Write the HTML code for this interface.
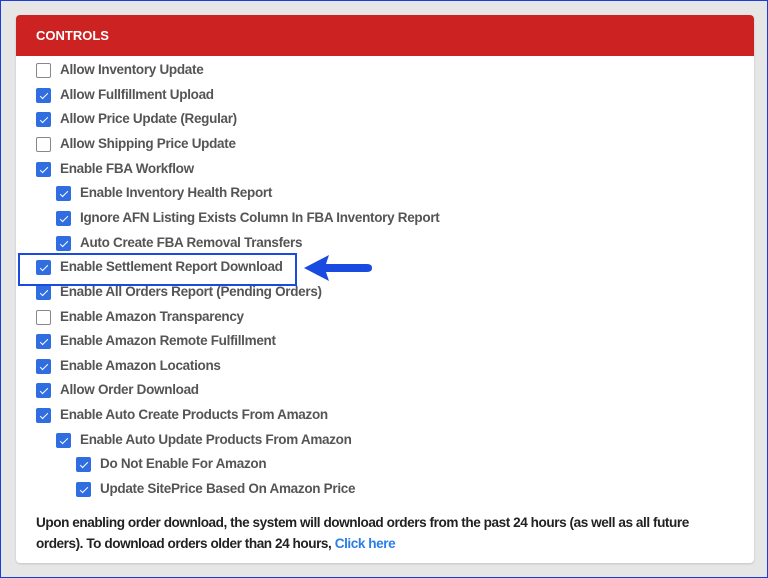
<!DOCTYPE html>
<html><head><style>
body{margin:0;width:768px;height:578px;background:#e6e6e6;font-family:"Liberation Sans",sans-serif;position:relative;overflow:hidden;box-sizing:border-box;border:1px solid #1a3fd8;}
.card{position:absolute;left:15px;top:14px;width:738px;height:548px;background:#fff;border-radius:4px;box-shadow:0 1px 2px rgba(0,0,0,.15);overflow:hidden}
.hdr{height:41px;background:#cc2222;color:#fff;font-weight:bold;font-size:13px;line-height:41px;padding-left:20px}
.row{position:absolute;height:20px;font-size:13.5px;color:#555;font-weight:bold;line-height:20px;white-space:nowrap;letter-spacing:-0.3px}
.cb{position:absolute;left:0;top:2px;width:15px;height:15px;border:1.5px solid #888;border-radius:2px;box-sizing:border-box}
.cb.on{background:#2f6de1;border-color:#2f6de1}
.cb.on::after{content:"";position:absolute;left:4.5px;top:1.5px;width:3px;height:7px;border:solid #fff;border-width:0 1.6px 1.6px 0;transform:rotate(45deg)}
.t{position:absolute;left:24px;top:-1px}
.p{position:absolute;width:700px;font-size:13.6px;color:#222;line-height:20.5px;font-weight:bold;letter-spacing:-0.45px;white-space:nowrap}
.p a{color:#2a7fe6;font-weight:bold;text-decoration:none}
.hl{position:absolute;left:17px;top:252px;width:279px;height:33px;border:2px solid #1a4be0;box-sizing:border-box}
</style></head><body>
<div class="card">
<div class="hdr">CONTROLS</div>
</div>
<div class="row" style="left:35px;top:60px"><span class="cb"></span><span class="t">Allow Inventory Update</span></div>
<div class="row" style="left:35px;top:85px"><span class="cb on"></span><span class="t">Allow Fullfillment Upload</span></div>
<div class="row" style="left:35px;top:109px"><span class="cb on"></span><span class="t">Allow Price Update (Regular)</span></div>
<div class="row" style="left:35px;top:134px"><span class="cb"></span><span class="t">Allow Shipping Price Update</span></div>
<div class="row" style="left:35px;top:159px"><span class="cb on"></span><span class="t">Enable FBA Workflow</span></div>
<div class="row" style="left:55px;top:183px"><span class="cb on"></span><span class="t">Enable Inventory Health Report</span></div>
<div class="row" style="left:55px;top:208px"><span class="cb on"></span><span class="t">Ignore AFN Listing Exists Column In FBA Inventory Report</span></div>
<div class="row" style="left:55px;top:233px"><span class="cb on"></span><span class="t">Auto Create FBA Removal Transfers</span></div>
<div class="row" style="left:35px;top:257px"><span class="cb on"></span><span class="t">Enable Settlement Report Download</span></div>
<div class="row" style="left:35px;top:282px"><span class="cb on"></span><span class="t">Enable All Orders Report (Pending Orders)</span></div>
<div class="row" style="left:35px;top:307px"><span class="cb"></span><span class="t">Enable Amazon Transparency</span></div>
<div class="row" style="left:35px;top:331px"><span class="cb on"></span><span class="t">Enable Amazon Remote Fulfillment</span></div>
<div class="row" style="left:35px;top:356px"><span class="cb on"></span><span class="t">Enable Amazon Locations</span></div>
<div class="row" style="left:35px;top:380px"><span class="cb on"></span><span class="t">Allow Order Download</span></div>
<div class="row" style="left:35px;top:405px"><span class="cb on"></span><span class="t">Enable Auto Create Products From Amazon</span></div>
<div class="row" style="left:55px;top:430px"><span class="cb on"></span><span class="t">Enable Auto Update Products From Amazon</span></div>
<div class="row" style="left:75px;top:454px"><span class="cb on"></span><span class="t">Do Not Enable For Amazon</span></div>
<div class="row" style="left:75px;top:479px"><span class="cb on"></span><span class="t">Update SitePrice Based On Amazon Price</span></div>
<div class="p" style="left:35px;top:512px">Upon enabling order download, the system will download orders from the past 24 hours (as well as all future<br>orders). To download orders older than 24 hours, <a>Click here</a></div>
<div class="hl"></div>
<svg style="position:absolute;left:300px;top:252px" width="72" height="30" viewBox="0 0 72 30">
<path d="M3 15 L28 2 L25 11 L66 11 Q71 11 71 15 Q71 19 66 19 L25 19 L28 28 Z" fill="#1a4be0"/>
</svg>
</body></html>
